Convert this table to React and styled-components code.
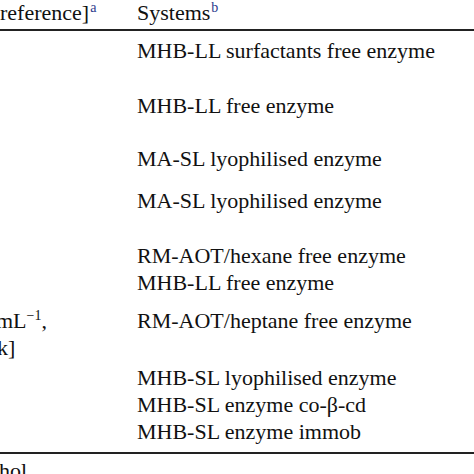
import React from "react"
import styled, { createGlobalStyle } from "styled-components"

const GlobalStyle = createGlobalStyle`
	html, body {
		margin: 0;
		padding: 0;
		background: #fff;
		overflow: hidden;
	}
`

const rows = [
	{ pad: 6, left: [], systems: ["MHB-LL surfactants free enzyme"] },
	{ pad: 28, left: [], systems: ["MHB-LL free enzyme"] },
	{ pad: 26, left: [], systems: ["MA-SL lyophilised enzyme"] },
	{ pad: 15, left: [], systems: ["MA-SL lyophilised enzyme"] },
	{
		pad: 28,
		left: [],
		systems: ["RM-AOT/hexane free enzyme", "MHB-LL free enzyme"],
	},
	{
		pad: 11,
		left: [
			{ shift: 4, text: <>mL<sup>−1</sup>,</> },
			{ shift: 3, text: "k]" },
		],
		systems: ["RM-AOT/heptane free enzyme"],
	},
	{
		pad: 3,
		left: [],
		systems: [
			"MHB-SL lyophilised enzyme",
			"MHB-SL enzyme co-β-cd",
			"MHB-SL enzyme immob",
		],
	},
]

const App = () => (
	<>
		<GlobalStyle />
		<Table>
			<HeadRow>
				<Cell>
					<Line shift={0}>
						reference]<Note>a</Note>
					</Line>
				</Cell>
				<Cell>
					<Line>
						Systems<Note>b</Note>
					</Line>
				</Cell>
			</HeadRow>
			<Body>
				{rows.map((row, i) => (
					<Row key={i} pad={row.pad}>
						<Cell>
							{row.left.map((l, j) => (
								<Line key={j} shift={l.shift}>
									{l.text}
								</Line>
							))}
						</Cell>
						<Cell>
							{row.systems.map((s) => (
								<Line key={s}>{s}</Line>
							))}
						</Cell>
					</Row>
				))}
			</Body>
			<Footer>
				<Line shift={1}>hol</Line>
			</Footer>
		</Table>
	</>
)

const Table = styled.div`
	font-family: "Liberation Serif", "Times New Roman", serif;
	font-size: 22px;
	line-height: 27px;
	color: #111;
	margin-top: -1px;
`

const HeadRow = styled.div`
	display: grid;
	grid-template-columns: 137px 1fr;
	padding-bottom: 3px;
	border-bottom: 2px solid #222;
`

const Body = styled.div`
	padding-bottom: 7px;
	border-bottom: 2px solid #222;
`

const Row = styled.div`
	display: grid;
	grid-template-columns: 137px 1fr;
	padding-top: ${(p) => p.pad}px;
`

const Cell = styled.div`
	display: flex;
	flex-direction: column;
	white-space: nowrap;
	min-width: 0;
`

const Line = styled.div`
	margin-left: ${(p) => -(p.shift || 0)}px;

	sup {
		font-size: 14px;
		line-height: 0;
		vertical-align: 8px;
	}
`

const Note = styled.sup`
	font-size: 14px;
	line-height: 0;
	vertical-align: 8px;
	color: #2b3a8c;
	margin-left: 1px;
`

const Footer = styled.div`
	padding-top: 3px;
`

export default App
